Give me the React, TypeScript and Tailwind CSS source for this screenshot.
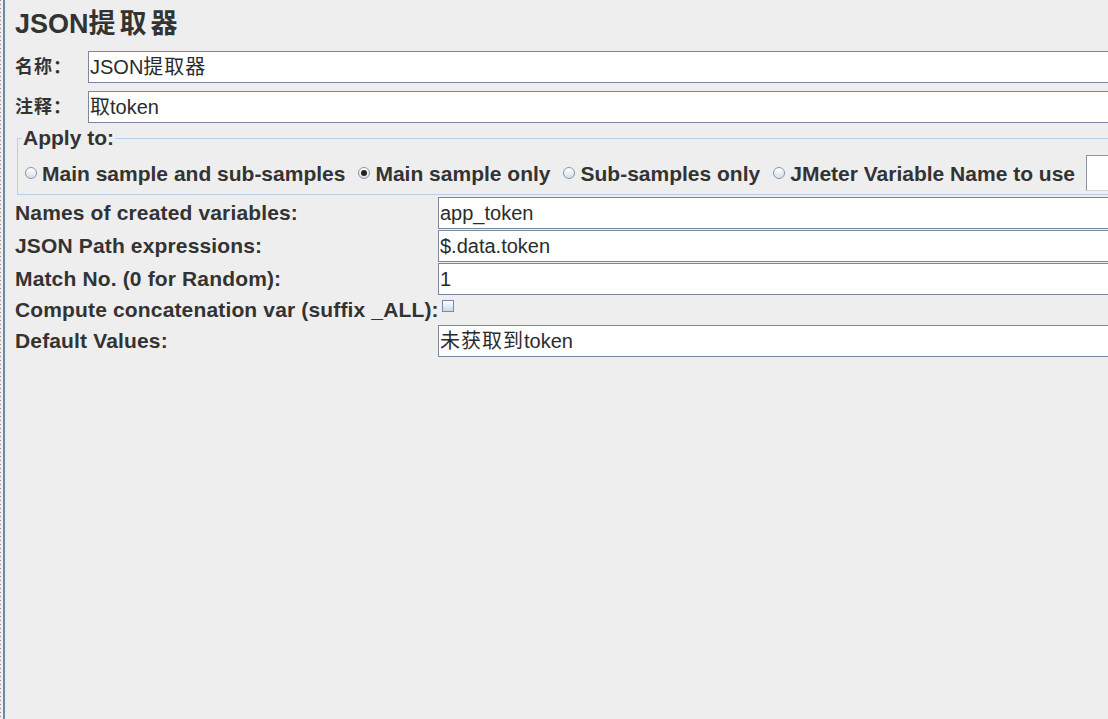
import React from "react";

const FONT = { fontFamily: '"Liberation Sans", Arial, "Noto Sans CJK SC", sans-serif' };

function Field({ children, className = "" }: { children?: React.ReactNode; className?: string }) {
  return (
    <div
      className={`flex-1 min-w-0 h-[32px] bg-white border-y border-l border-[#7a8899] flex items-center pl-[1px] text-[20px] text-[#2b2b2b] whitespace-nowrap overflow-hidden ${className}`}
    >
      {children}
    </div>
  );
}

function Radio({ checked, label }: { checked?: boolean; label: string }) {
  return (
    <div className="flex items-center gap-[5px] shrink-0">
      <span className="w-[12px] h-[12px] rounded-full border border-[#8595a8] bg-[linear-gradient(to_bottom,#ffffff,#d9e0e8)] flex items-center justify-center">
        {checked && <span className="w-[6px] h-[6px] rounded-full bg-[#222]" />}
      </span>
      <span className="text-[21px] font-bold text-[#333] leading-none">{label}</span>
    </div>
  );
}

function Row({ label, children }: { label: string; children: React.ReactNode }) {
  return (
    <div className="flex items-center h-[32px]">
      <div className="w-[433px] pl-[10px] shrink-0 text-[21px] font-bold tracking-[0.15px] text-[#333] whitespace-nowrap">
        {label}
      </div>
      <Field>{children}</Field>
    </div>
  );
}

function CnLabel({ text }: { text: string }) {
  return (
    <div className="w-[83px] pl-[10px] shrink-0 text-[18px] font-semibold tracking-[1px] text-[#333] whitespace-nowrap">
      {text}
    </div>
  );
}

export default function App() {
  return (
    <div className="w-[1108px] h-[719px] overflow-hidden bg-[#eeeeee] flex" style={FONT}>
      <div className="w-[1px] h-full bg-[repeating-linear-gradient(to_bottom,#8595a8_0px,#8595a8_1px,transparent_1px,transparent_4px)]" />
      <div className="w-[2px] h-full" />
      <div className="w-[2px] h-full bg-[#7088a6]" />
      <div className="flex-1 min-w-0 flex flex-col">
        <div className="h-[49px] flex items-center pl-[10px] text-[27px] font-bold text-[#333] whitespace-nowrap">
          JSON<span className="tracking-[4px]">提取器</span>
        </div>

        <div className="mt-[2px] flex items-center h-[32px]">
          <CnLabel text="名称：" />
          <Field>
            JSON<span className="tracking-[1px]">提取器</span>
          </Field>
        </div>
        <div className="mt-[8px] flex items-center h-[32px]">
          <CnLabel text="注释：" />
          <Field>取token</Field>
        </div>

        <fieldset className="mt-[3px] ml-[12px] border-y border-l border-[#b8cfe5] pl-[7px] pt-[5px] pb-[3px]">
          <legend className="ml-[-3px] px-[1px] text-[21px] font-bold text-[#333] leading-[24px]">
            Apply to:
          </legend>
          <div className="flex items-center h-[36px] gap-[13px]">
            <Radio label="Main sample and sub-samples" />
            <Radio checked label="Main sample only" />
            <Radio label="Sub-samples only" />
            <Radio label="JMeter Variable Name to use" />
            <div className="flex-1 min-w-0 h-[36px] ml-[-2px] bg-white border-t border-l border-[#8a96a3] border-b border-b-[#d0d6de]" />
          </div>
        </fieldset>

        <div className="mt-[2px] flex flex-col gap-[1px]">
          <Row label="Names of created variables:">app_token</Row>
          <Row label="JSON Path expressions:">$.data.token</Row>
          <Row label="Match No. (0 for Random):">1</Row>
        </div>

        <div className="flex items-start h-[30px]">
          <div className="w-[433px] pl-[10px] shrink-0 h-[30px] flex items-center text-[21px] font-bold tracking-[0.15px] text-[#333] whitespace-nowrap">
            Compute concatenation var (suffix _ALL):
          </div>
          <span className="mt-[5px] ml-[4px] w-[12px] h-[12px] border border-[#7a8a9e] bg-[linear-gradient(to_bottom,#ffffff,#c9d8ea)]" />
        </div>

        <Row label="Default Values:">
          <span className="tracking-[1px]">未获取到</span>token
        </Row>
      </div>
    </div>
  );
}
